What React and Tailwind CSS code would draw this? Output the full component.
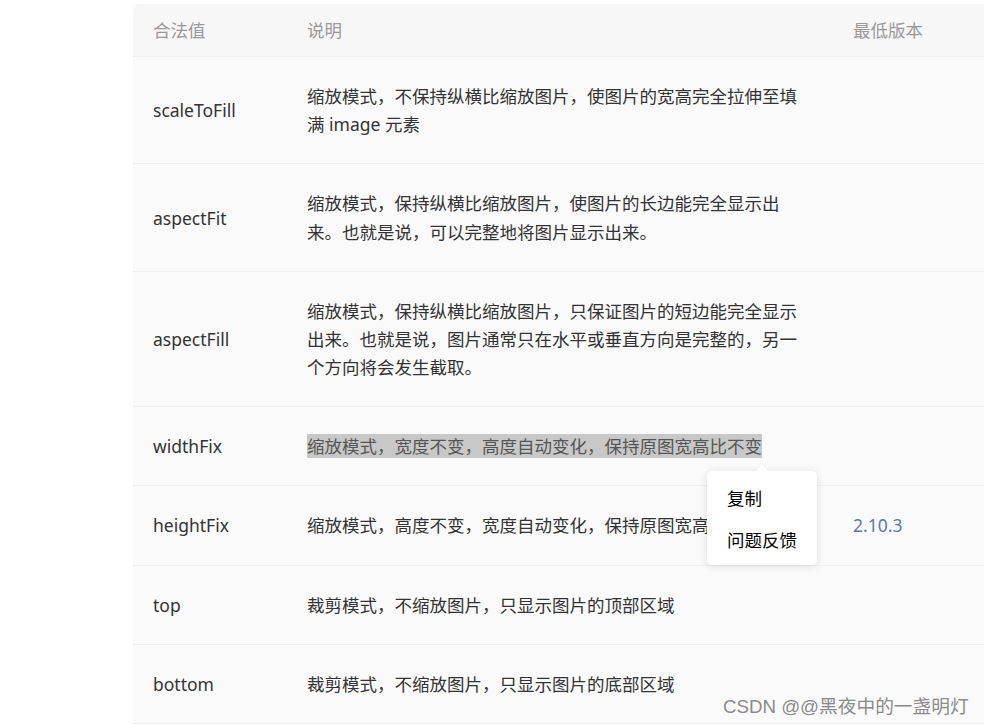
import React from "react";

const rows = [
    {value: "scaleToFill", desc: "缩放模式，不保持纵横比缩放图片，使图片的宽高完全拉伸至填满 image 元素", version: ""},
    {value: "aspectFit", desc: "缩放模式，保持纵横比缩放图片，使图片的长边能完全显示出来。也就是说，可以完整地将图片显示出来。", version: ""},
    {value: "aspectFill", desc: "缩放模式，保持纵横比缩放图片，只保证图片的短边能完全显示出来。也就是说，图片通常只在水平或垂直方向是完整的，另一个方向将会发生截取。", version: ""},
    {value: "widthFix", desc: "缩放模式，宽度不变，高度自动变化，保持原图宽高比不变", version: "", selected: true},
    {value: "heightFix", desc: "缩放模式，高度不变，宽度自动变化，保持原图宽高比不变", version: "2.10.3"},
    {value: "top", desc: "裁剪模式，不缩放图片，只显示图片的顶部区域", version: ""},
    {value: "bottom", desc: "裁剪模式，不缩放图片，只显示图片的底部区域", version: ""},
];

const font = "font-['Noto_Sans','Noto_Sans_CJK_SC',sans-serif]";

const App = () => {
    return (
        <div className={`relative w-[984px] h-[726px] overflow-hidden bg-white pl-[133px] pt-[4px] ${font}`}>
            <div className="w-[900px] rounded-tl-[7px] bg-[#fafafa] text-[17.5px] leading-[28.16px] text-[#333]">
                {/* 表头 */}
                <div className="grid grid-cols-[154px_546px_1fr] items-center border-b border-[#efefef] bg-[#f7f7f7] rounded-tl-[7px] text-[#999]">
                    <div className="px-[20px] py-[12px]">合法值</div>
                    <div className="px-[20px] py-[12px]">说明</div>
                    <div className="px-[20px] py-[12px]">最低版本</div>
                </div>
                {rows.map(row => (
                    <div key={row.value}
                         className="grid grid-cols-[154px_546px_1fr] items-center border-b border-[#efefef]">
                        <div className="px-[20px] py-[25px]">{row.value}</div>
                        <div className="px-[20px] py-[25px]">
                            {row.selected ? (
                                <span className="bg-[#c8c8c8] text-[#555]">{row.desc}</span>
                            ) : row.desc}
                        </div>
                        <div className="px-[20px] py-[25px] text-[#5f78a6]">{row.version}</div>
                    </div>
                ))}
            </div>

            {/* 右键菜单 */}
            <div className="absolute left-[707px] top-[471px] w-[110px] rounded-[5px] bg-white pt-[6px] pb-[4px] shadow-[0_1px_8px_rgba(0,0,0,0.12)] text-[17.5px] leading-[28px] text-black">
                <div className="absolute -top-[6px] left-[49px] h-0 w-0 border-x-[6px] border-b-[6px] border-x-transparent border-b-white"></div>
                <div className="px-[20px] py-[7px]">复制</div>
                <div className="px-[20px] py-[7px]">问题反馈</div>
            </div>

            {/* 水印 */}
            <div
                className="absolute left-[723px] top-[694px] text-[18.7px] leading-[26px] text-[#8a8a8a] font-['Liberation_Sans','Noto_Sans_CJK_SC',sans-serif] [text-shadow:0_0_2px_#fff]">
                CSDN @@黑夜中的一盏明灯
            </div>
        </div>
    );
};

export default App;
